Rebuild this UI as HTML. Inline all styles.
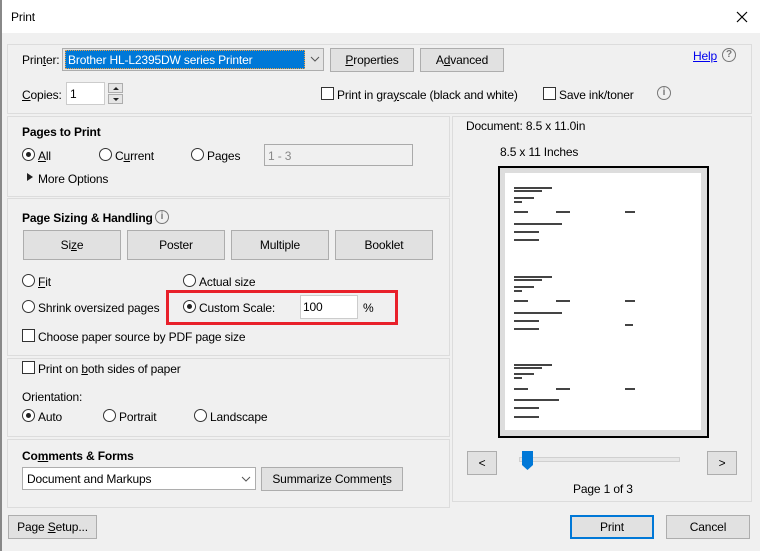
<!DOCTYPE html>
<html><head><meta charset="utf-8"><style>
*{box-sizing:border-box;margin:0;padding:0}
body{width:760px;height:551px;background:#f0f0f0;font-family:"Liberation Sans",Arial,sans-serif;font-size:12px;letter-spacing:-0.15px;color:#000;position:relative;overflow:hidden}
.a{position:absolute;white-space:nowrap}
.panel{position:absolute;border:1px solid #dcdcdc;}
.btn{position:absolute;background:#e1e1e1;border:1px solid #adadad;text-align:center;line-height:22px}
.radio{position:absolute;width:13px;height:13px;border:1px solid #333;border-radius:50%;background:#fff}
.radio.on::after{content:"";position:absolute;left:3px;top:3px;width:5px;height:5px;border-radius:50%;background:#222}
.cb{position:absolute;width:13px;height:13px;border:1px solid #333;background:#fff}
.b{font-weight:bold}
.icon{position:absolute;width:14px;height:14px;border:1.5px solid #777;border-radius:50%;color:#777;font-size:10px;font-weight:bold;text-align:center;line-height:11px;letter-spacing:0}
.ln{position:absolute;height:1.5px;background:#444}
</style></head><body>
<div class="a" style="left:0;top:0;width:760px;height:33px;background:#fff"></div>
<div class="a" style="left:0;top:0;width:2px;height:551px;background:#888"></div>
<div class="a" style="left:11px;top:10px;font-size:12px">Print</div>
<svg class="a" style="left:736px;top:11px" width="12" height="12"><path d="M1 1L11 11M11 1L1 11" stroke="#000" stroke-width="1.2"/></svg>

<div class="panel" style="left:7px;top:44px;width:745px;height:70px"></div>
<div class="a" style="left:22px;top:53px">Prin<u>t</u>er:</div>
<div class="a" style="left:62px;top:48px;width:262px;height:23px;background:#e5e5e5;border:1px solid #adadad"></div>
<div class="a" style="left:65px;top:50px;width:240px;height:19px;background:#0078d7;color:#fff;padding-left:2px;line-height:18px;border:1px dotted #f0a040">Brother HL-L2395DW series Printer</div>
<svg class="a" style="left:310px;top:56px" width="10" height="6"><path d="M1 1L5 5L9 1" stroke="#555" fill="none"/></svg>
<div class="btn" style="left:330px;top:48px;width:84px;height:24px"><u>P</u>roperties</div>
<div class="btn" style="left:420px;top:48px;width:84px;height:24px">A<u>d</u>vanced</div>
<div class="a" style="left:693px;top:49px;color:#00e;text-decoration:underline">Help</div>
<div class="icon" style="left:722px;top:48px">?</div>
<div class="a" style="left:22px;top:88px"><u>C</u>opies:</div>
<div class="a" style="left:66px;top:82px;width:39px;height:23px;background:#fff;border:1px solid #ccc;padding:4px 3px">1</div>
<div class="a" style="left:108px;top:83px;width:15px;height:10px;border:1px solid #adadad;background:#e5e5e5"></div>
<div class="a" style="left:108px;top:94px;width:15px;height:10px;border:1px solid #adadad;background:#e5e5e5"></div>
<svg class="a" style="left:112px;top:86px" width="8" height="16"><path d="M1 4L4 1L7 4Z M1 12L4 15L7 12Z" fill="#222"/></svg>
<div class="cb" style="left:321px;top:87px"></div>
<div class="a" style="left:337px;top:88px">Print in gra<u>y</u>scale (black and white)</div>
<div class="cb" style="left:543px;top:87px"></div>
<div class="a" style="left:559px;top:88px">Save ink/toner</div>
<div class="icon" style="left:657px;top:86px">i</div>

<div class="panel" style="left:7px;top:116px;width:443px;height:81px"></div>
<div class="a b" style="left:22px;top:125px">Pages to Print</div>
<div class="radio on" style="left:22px;top:148px"></div><div class="a" style="left:38px;top:149px"><u>A</u>ll</div>
<div class="radio" style="left:99px;top:148px"></div><div class="a" style="left:115px;top:149px">C<u>u</u>rrent</div>
<div class="radio" style="left:191px;top:148px"></div><div class="a" style="left:207px;top:149px">Pa<u>g</u>es</div>
<div class="a" style="left:264px;top:144px;width:149px;height:22px;border:1px solid #aaa;background:#f0f0f0;color:#888;padding:4px 3px">1 - 3</div>
<svg class="a" style="left:27px;top:173px" width="6" height="8"><path d="M0 0L6 4L0 8Z" fill="#222"/></svg>
<div class="a" style="left:38px;top:172px">More Options</div>

<div class="panel" style="left:7px;top:198px;width:443px;height:158px"></div>
<div class="a b" style="left:22px;top:211px">Page Sizing &amp; Handling</div>
<div class="icon" style="left:155px;top:210px">i</div>
<div class="btn" style="left:23px;top:230px;width:98px;height:30px;line-height:29px">Si<u>z</u>e</div>
<div class="btn" style="left:127px;top:230px;width:98px;height:30px;line-height:29px">Poster</div>
<div class="btn" style="left:231px;top:230px;width:98px;height:30px;line-height:29px">Multiple</div>
<div class="btn" style="left:335px;top:230px;width:98px;height:30px;line-height:29px">Booklet</div>
<div class="radio" style="left:22px;top:274px"></div><div class="a" style="left:38px;top:275px"><u>F</u>it</div>
<div class="radio" style="left:183px;top:274px"></div><div class="a" style="left:199px;top:275px">Actual size</div>
<div class="radio" style="left:22px;top:300px"></div><div class="a" style="left:38px;top:301px">Shrink oversized pages</div>
<div class="radio on" style="left:183px;top:300px"></div><div class="a" style="left:199px;top:301px">Custom Scale:</div>
<div class="a" style="left:300px;top:295px;width:58px;height:24px;background:#fff;border:1px solid #ccc;padding:4px 2px">100</div>
<div class="a" style="left:363px;top:301px">%</div>
<div class="a" style="left:166px;top:290px;width:232px;height:35px;border:3px solid #e8202a"></div>
<div class="cb" style="left:22px;top:329px"></div><div class="a" style="left:38px;top:330px">Choose paper source by PDF page size</div>

<div class="panel" style="left:7px;top:358px;width:443px;height:79px"></div>
<div class="cb" style="left:22px;top:361px"></div><div class="a" style="left:38px;top:362px">Print on <u>b</u>oth sides of paper</div>
<div class="a" style="left:22px;top:390px">Orientation:</div>
<div class="radio on" style="left:22px;top:409px"></div><div class="a" style="left:38px;top:410px">Auto</div>
<div class="radio" style="left:103px;top:409px"></div><div class="a" style="left:119px;top:410px">Portrait</div>
<div class="radio" style="left:194px;top:409px"></div><div class="a" style="left:210px;top:410px">Landscape</div>

<div class="panel" style="left:7px;top:439px;width:443px;height:69px"></div>
<div class="a b" style="left:22px;top:449px">Co<u>m</u>ments &amp; Forms</div>
<div class="a" style="left:22px;top:467px;width:234px;height:23px;background:#fff;border:1px solid #adadad;padding:4px 4px">Document and Markups</div>
<svg class="a" style="left:241px;top:476px" width="10" height="6"><path d="M1 1L5 5L9 1" stroke="#555" fill="none"/></svg>
<div class="btn" style="left:261px;top:467px;width:142px;height:24px">Summarize Commen<u>t</u>s</div>

<div class="btn" style="left:8px;top:515px;width:89px;height:24px">Page <u>S</u>etup...</div>

<div class="panel" style="left:452px;top:116px;width:300px;height:386px"></div>
<div class="a" style="left:466px;top:119px">Document: 8.5 x 11.0in</div>
<div class="a" style="left:500px;top:145px">8.5 x 11 Inches</div>
<div class="a" style="left:498px;top:166px;width:211px;height:272px;border:2px solid #000;background:#ddd"></div>
<div class="a" style="left:505px;top:173px;width:196px;height:257px;background:#fff"></div>
<div class="ln" style="left:514px;top:187px;width:38px"></div><div class="ln" style="left:514px;top:190px;width:28px"></div>
<div class="ln" style="left:514px;top:197px;width:20px"></div><div class="ln" style="left:514px;top:201px;width:8px"></div>
<div class="ln" style="left:514px;top:211px;width:14px"></div><div class="ln" style="left:556px;top:211px;width:14px"></div><div class="ln" style="left:625px;top:211px;width:10px"></div>
<div class="ln" style="left:514px;top:223px;width:48px"></div><div class="ln" style="left:514px;top:231px;width:25px"></div><div class="ln" style="left:514px;top:239px;width:25px"></div>
<div class="ln" style="left:514px;top:276px;width:38px"></div><div class="ln" style="left:514px;top:279px;width:28px"></div>
<div class="ln" style="left:514px;top:286px;width:20px"></div><div class="ln" style="left:514px;top:290px;width:8px"></div>
<div class="ln" style="left:514px;top:300px;width:14px"></div><div class="ln" style="left:556px;top:300px;width:14px"></div><div class="ln" style="left:625px;top:300px;width:10px"></div>
<div class="ln" style="left:514px;top:312px;width:48px"></div><div class="ln" style="left:514px;top:320px;width:25px"></div><div class="ln" style="left:625px;top:324px;width:8px"></div><div class="ln" style="left:514px;top:328px;width:25px"></div>
<div class="ln" style="left:514px;top:364px;width:38px"></div><div class="ln" style="left:514px;top:367px;width:28px"></div>
<div class="ln" style="left:514px;top:373px;width:20px"></div><div class="ln" style="left:514px;top:377px;width:8px"></div>
<div class="ln" style="left:514px;top:388px;width:14px"></div><div class="ln" style="left:556px;top:388px;width:14px"></div><div class="ln" style="left:625px;top:388px;width:10px"></div>
<div class="ln" style="left:514px;top:399px;width:45px"></div><div class="ln" style="left:514px;top:407px;width:25px"></div><div class="ln" style="left:514px;top:416px;width:25px"></div>
<div class="btn" style="left:467px;top:451px;width:30px;height:24px">&lt;</div>
<div class="a" style="left:519px;top:457px;width:161px;height:5px;background:#e7e7e7;border:1px solid #d0d0d0"></div>
<svg class="a" style="left:522px;top:451px" width="11" height="20"><path d="M0 0H11V14L5.5 19L0 14Z" fill="#0078d7"/></svg>
<div class="btn" style="left:707px;top:451px;width:30px;height:24px">&gt;</div>
<div class="a" style="left:573px;top:482px">Page 1 of 3</div>

<div class="btn" style="left:570px;top:515px;width:84px;height:24px;border:2px solid #0078d7;line-height:20px">Print</div>
<div class="btn" style="left:666px;top:515px;width:84px;height:24px">Cancel</div>
</body></html>
